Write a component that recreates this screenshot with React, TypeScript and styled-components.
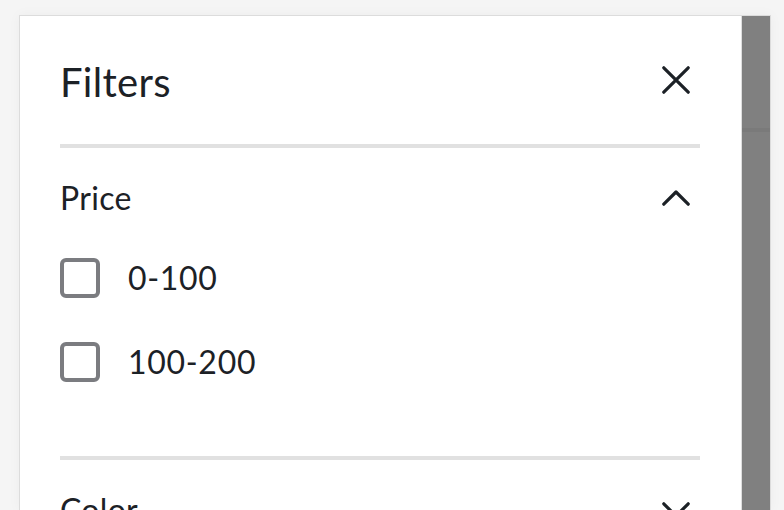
import React from "react";
import styled, { createGlobalStyle } from "styled-components";

const GlobalStyle = createGlobalStyle`
  html, body {
    margin: 0;
    padding: 0;
    background: #f5f5f5;
    height: 100%;
    overflow: hidden;
  }
  body {
    font-family: Lato, "Open Sans", sans-serif;
    color: #1c2126;
  }
`;

const Page = styled.div`
  padding: 15px 0 0 19px;
  height: 510px;
  box-sizing: border-box;
  overflow: hidden;
`;

const Frame = styled.div`
  display: flex;
  width: 752px;
  height: 495px;
  box-sizing: border-box;
  border: 1px solid #dcdcdc;
  border-bottom: none;
  box-shadow: 0 0 12px rgba(0, 0, 0, 0.04);
  overflow: hidden;
`;

const Drawer = styled.aside`
  flex: none;
  width: 722px;
  box-sizing: border-box;
  background: #ffffff;
  border-right: 1px solid #dedede;
  padding: 0 41px 0 40px;
`;

const Backdrop = styled.div`
  flex: 1;
  display: flex;
  flex-direction: column;
  background: #808080;
`;

const BehindHeader = styled.div`
  height: 112px;
  border-bottom: 4px solid #7a7a7a;
`;

const Header = styled.div`
  display: flex;
  align-items: center;
  justify-content: space-between;
  padding-top: 42px;
  padding-bottom: 38px;
`;

const Title = styled.h2`
  margin: 0;
  font-size: 40px;
  line-height: 48px;
  font-weight: 400;
  letter-spacing: 0.3px;
  color: #1c2126;
`;

const IconButton = styled.button`
  display: flex;
  align-items: center;
  justify-content: center;
  width: 32px;
  height: 32px;
  padding: 0;
  margin: 0 8px 4px 0;
  border: none;
  background: transparent;
  color: #1c2126;
  cursor: pointer;
`;

const Divider = styled.hr`
  margin: 0;
  border: none;
  height: 4px;
  background: #e1e1e1;
`;

const Section = styled.section<{ $open?: boolean }>`
  padding-top: 30px;
  padding-bottom: ${(p) => (p.$open ? "74px" : "30px")};
`;

const SectionHeader = styled.div`
  display: flex;
  align-items: center;
  justify-content: space-between;
  height: 40px;
`;

const SectionTitle = styled.h3`
  margin: 0;
  font-size: 32px;
  line-height: 40px;
  font-weight: 400;
  letter-spacing: 0.3px;
  color: #1c2126;
`;

const Options = styled.div`
  display: flex;
  flex-direction: column;
  gap: 44px;
  margin-top: 40px;
`;

const Option = styled.label`
  display: flex;
  align-items: center;
  gap: 28px;
  height: 40px;
  cursor: pointer;
`;

const Box = styled.span`
  width: 40px;
  height: 40px;
  box-sizing: border-box;
  border: 4px solid #7b7c80;
  border-radius: 6px;
  flex: none;
`;

const OptionText = styled.span`
  font-size: 32px;
  line-height: 40px;
  letter-spacing: 0.7px;
  color: #1c2126;
`;

const Chevron = ({ up }: { up?: boolean }) => (
  <svg width="28" height="16" viewBox="0 0 28 16" fill="none">
    <polyline
      points={up ? "1.8,14.2 14,2 26.2,14.2" : "1.8,1.8 14,14 26.2,1.8"}
      stroke="currentColor"
      strokeWidth="3.2"
      strokeLinecap="round"
      strokeLinejoin="round"
    />
  </svg>
);

const CloseIcon = () => (
  <svg width="28" height="28" viewBox="0 0 28 28" fill="none">
    <path
      d="M1.8 1.8 L26.2 26.2 M26.2 1.8 L1.8 26.2"
      stroke="currentColor"
      strokeWidth="3.2"
      strokeLinecap="round"
    />
  </svg>
);

const ChevronWrap = styled.span`
  display: flex;
  align-items: center;
  justify-content: center;
  width: 32px;
  height: 32px;
  margin-right: 8px;
  color: #1c2126;
`;

const prices = ["0-100", "100-200"];

export default function App() {
  return (
    <>
      <GlobalStyle />
      <Page>
        <Frame>
          <Drawer>
            <Header>
              <Title>Filters</Title>
              <IconButton aria-label="Close">
                <CloseIcon />
              </IconButton>
            </Header>
            <Divider />
            <Section $open>
              <SectionHeader>
                <SectionTitle>Price</SectionTitle>
                <ChevronWrap>
                  <Chevron up />
                </ChevronWrap>
              </SectionHeader>
              <Options>
                {prices.map((p) => (
                  <Option key={p}>
                    <Box />
                    <OptionText>{p}</OptionText>
                  </Option>
                ))}
              </Options>
            </Section>
            <Divider />
            <Section>
              <SectionHeader>
                <SectionTitle>Color</SectionTitle>
                <ChevronWrap>
                  <Chevron />
                </ChevronWrap>
              </SectionHeader>
            </Section>
          </Drawer>
          <Backdrop>
            <BehindHeader />
          </Backdrop>
        </Frame>
      </Page>
    </>
  );
}
